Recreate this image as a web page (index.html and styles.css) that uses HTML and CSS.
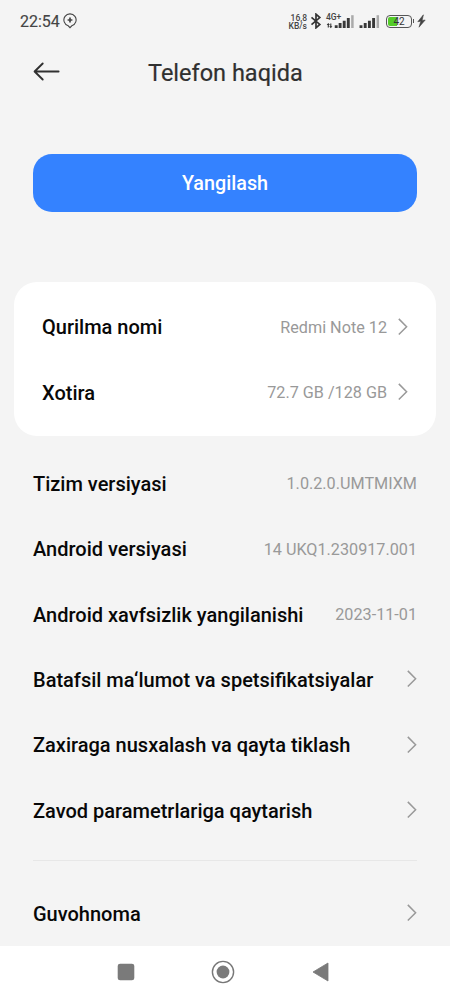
FILE: index.html
```html
<!DOCTYPE html>
<html lang="uz">
<head>
<meta charset="utf-8">
<title>Telefon haqida</title>
<link rel="stylesheet" href="styles.css">
</head>
<body>
<div class="screen">
  <header class="status">
    <span class="clock">22:54</span>
    <svg class="pin" width="14" height="16" viewBox="0 0 14 16"><path d="M5.2 12.8a6.1 6.1 0 1 1 3.6 0L7 14.6z" fill="none" stroke="#444" stroke-width="1.1"/><path d="M7 4.6v4.8M4.6 7h4.8" stroke="#444" stroke-width="1.7"/></svg>
    <span class="rate"><span>16,8</span><span>KB/s</span></span>
    <svg class="bt" width="12" height="16" viewBox="0 0 12 16"><path d="M1.5 4.4 9.8 11.4 6 14.8V1.2L9.8 4.6 1.5 11.6" fill="none" stroke="#333" stroke-width="1.7"/></svg>
    <span class="mobile">
      <span class="net">4G+</span>
      <svg width="29" height="15" viewBox="0 0 29 15"><path d="M2.3 13.5V10M4.8 9.5V13" stroke="#333" stroke-width="1.1"/><path d="M.7 11 2.3 9l1.6 2zM3.2 12.3l1.6 2 1.6-2z" fill="#333"/><path d="M10.2 14v-2.8M14.1 14V9M18.2 14V6.8M22.3 14V4" stroke="#383838" stroke-width="2.9"/><path d="M26.4 14V1.2" stroke="#aaa" stroke-width="2.5"/></svg>
    </span>
    <svg class="signal" width="21" height="15" viewBox="0 0 21 15"><path d="M2 14v-2.8M6.2 14V9M10.4 14V6.8M14.6 14V4" stroke="#383838" stroke-width="2.9"/><path d="M18.8 14V1.2" stroke="#aaa" stroke-width="2.5"/></svg>
    <span class="battery"><span class="pct">42</span></span>
    <svg class="bolt" width="9" height="14" viewBox="0 0 9 14"><path d="M6.4.8.8 7.7l3-.4L2 13.2 8.2 6l-3.1.5z" fill="#444" stroke="#444" stroke-width=".6"/></svg>
  </header>

  <div class="titlebar">
    <svg class="back" width="28" height="20" viewBox="0 0 28 20"><path d="M25.6 9.5H2M9.7 1.5 1.6 9.5 9.7 17.5" fill="none" stroke="#303030" stroke-width="1.9" stroke-linecap="round" stroke-linejoin="round"/></svg>
    <h1>Telefon haqida</h1>
  </div>

  <button class="update">Yangilash</button>

  <section class="card">
    <div class="row"><span class="label">Qurilma nomi</span><span class="value">Redmi Note 12</span><svg class="chev" width="10" height="18" viewBox="0 0 10 18"><path d="M.8.9 8.6 8.7.8 16.5"/></svg></div>
    <div class="row"><span class="label">Xotira</span><span class="value">72.7 GB /128 GB</span><svg class="chev" width="10" height="18" viewBox="0 0 10 18"><path d="M.8.9 8.6 8.7.8 16.5"/></svg></div>
  </section>

  <section class="list">
    <div class="row"><span class="label">Tizim versiyasi</span><span class="value">1.0.2.0.UMTMIXM</span></div>
    <div class="row"><span class="label">Android versiyasi</span><span class="value">14 UKQ1.230917.001</span></div>
    <div class="row"><span class="label">Android xavfsizlik yangilanishi</span><span class="value">2023-11-01</span></div>
    <div class="row"><span class="label">Batafsil ma‘lumot va spetsifikatsiyalar</span><svg class="chev" width="10" height="18" viewBox="0 0 10 18"><path d="M.8.9 8.6 8.7.8 16.5"/></svg></div>
    <div class="row"><span class="label">Zaxiraga nusxalash va qayta tiklash</span><svg class="chev" width="10" height="18" viewBox="0 0 10 18"><path d="M.8.9 8.6 8.7.8 16.5"/></svg></div>
    <div class="row"><span class="label">Zavod parametrlariga qaytarish</span><svg class="chev" width="10" height="18" viewBox="0 0 10 18"><path d="M.8.9 8.6 8.7.8 16.5"/></svg></div>
    <hr>
    <div class="row"><span class="label">Guvohnoma</span><svg class="chev" width="10" height="18" viewBox="0 0 10 18"><path d="M.8.9 8.6 8.7.8 16.5"/></svg></div>
  </section>

  <nav class="nav">
    <svg width="18" height="18" viewBox="0 0 18 18"><rect x=".7" y=".7" width="16.6" height="16.6" rx="2.4" fill="#7a7a7a"/></svg>
    <svg width="24" height="24" viewBox="0 0 24 24"><circle cx="12" cy="12" r="10.6" fill="none" stroke="#777" stroke-width="1.4"/><circle cx="12" cy="12" r="6.4" fill="#7a7a7a"/></svg>
    <svg width="17" height="20" viewBox="0 0 17 20"><path d="M16 1v18L1 10z" fill="#7a7a7a" stroke="#7a7a7a" stroke-width=".8" stroke-linejoin="round"/></svg>
  </nav>
</div>
</body>
</html>
```

FILE: styles.css
```css
* { box-sizing: border-box; }

body {
  margin: 0;
  background: #f4f4f4;
  font-family: Roboto, "Noto Sans", sans-serif;
}

.screen {
  display: flex;
  flex-direction: column;
  width: 450px;
  height: 1000px;
  overflow: hidden;
}

.status {
  display: flex;
  align-items: center;
  flex: none;
  height: 42px;
  padding-left: 20px;
  color: #444;
}

.clock {
  width: 43px;
  padding-top: 1px;
  font-size: 16px;
  white-space: nowrap;
  -webkit-text-stroke: 0.15px #444;
}

.rate {
  display: flex;
  flex-direction: column;
  align-items: flex-end;
  width: 18px;
  margin-left: 212px;
  margin-top: 2px;
  font-size: 8.5px;
  font-weight: 500;
  line-height: 8px;
  white-space: nowrap;
}

.bt { margin-left: 3px; }

.mobile {
  position: relative;
  display: flex;
  margin-left: 4px;
}

.net {
  position: absolute;
  left: 0;
  top: -1px;
  font-size: 8.5px;
  font-weight: 500;
  line-height: 9px;
}

.signal { margin-left: 4px; }

.battery {
  position: relative;
  display: flex;
  align-items: center;
  justify-content: center;
  width: 26px;
  height: 13px;
  margin-left: 6px;
  padding: 1px;
  border: 1.5px solid #555;
  border-radius: 4px;
  background: linear-gradient(90deg, #54cc28 42%, transparent 42%) content-box;
}

.battery::after {
  content: "";
  position: absolute;
  right: -3px;
  top: 3px;
  width: 1.5px;
  height: 4px;
  background: #555;
}

.pct { padding-top: 1px; font-size: 10px; line-height: 10px; color: #333; }
.bolt { margin-left: 5px; }

.titlebar {
  display: flex;
  align-items: center;
  flex: none;
  height: 60px;
  padding-left: 33px;
}

.titlebar h1 {
  margin: 1px 0 0 87px;
  font-size: 23.5px;
  font-weight: 400;
  line-height: 30px;
  color: #303030;
  -webkit-text-stroke: 0.2px #303030;
}

.update {
  flex: none;
  width: 384px;
  height: 58px;
  margin: 52px 0 0 33px;
  padding: 0;
  border: 0;
  border-radius: 19px;
  background: #3482ff;
  color: #fff;
  font: 500 19.8px Roboto, sans-serif;
}

.card {
  flex: none;
  width: 422px;
  height: 154px;
  margin: 70px 0 0 14px;
  padding: 12px 28px;
  border-radius: 23px;
  background: #fff;
}

.row {
  display: flex;
  align-items: center;
  height: 65.4px;
  white-space: nowrap;
}

.label {
  padding-top: 1px;
  font-size: 20px;
  font-weight: 500;
  color: #080808;
}

.value { margin-left: auto; padding-top: 1px; font-size: 16.2px; color: #999; }
.chev { margin-left: auto; fill: none; stroke: #999; stroke-width: 1.5; }
.value + .chev { margin-left: 11px; }

.list {
  flex: none;
  height: 510px;
  padding: 14.6px 33px 0;
}

.list hr {
  height: 1.5px;
  margin: 17px 0 19px;
  border: 0;
  background: #e7e7e7;
}

.nav {
  display: flex;
  align-items: center;
  flex: none;
  height: 54px;
  padding: 0 121px 3px 116.5px;
  justify-content: space-between;
  background: #fff;
}
```
